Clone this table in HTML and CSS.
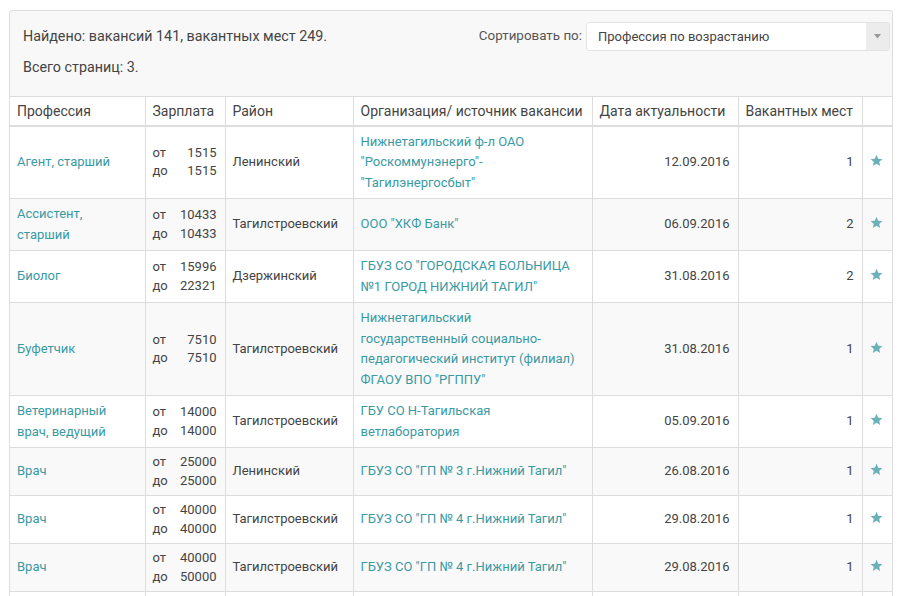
FILE: index.html
```html
<!DOCTYPE html>
<html lang="ru">
<head>
<meta charset="utf-8">
<link rel="stylesheet" href="styles.css">
</head>
<body>
<div class="panel">
  <div class="panel-head">
    <div class="summary">
      <p>Найдено: вакансий 141, вакантных мест 249.</p>
      <p>Всего страниц: 3.</p>
    </div>
    <div class="sort">
      <span class="sort-label">Сортировать по:</span>
      <div class="select">
        <span class="select-value">Профессия по возрастанию</span>
        <span class="select-arrow"><svg width="7" height="5" viewBox="0 0 7 5"><path d="M0 0h7L3.5 4.5z" fill="#999"/></svg></span>
      </div>
    </div>
  </div>
  <table class="jobs">
    <colgroup>
      <col class="c-prof"><col class="c-sal"><col class="c-dist"><col class="c-org"><col class="c-date"><col class="c-num"><col class="c-star">
    </colgroup>
    <thead>
      <tr>
        <th>Профессия</th><th>Зарплата</th><th>Район</th><th>Организация/ источник вакансии</th><th>Дата актуальности</th><th>Вакантных мест</th><th></th>
      </tr>
    </thead>
    <tbody>
      <tr>
        <td><a href="#">Агент, старший</a></td>
        <td><div class="sal"><span>от</span><span>1515</span><span>до</span><span>1515</span></div></td>
        <td>Ленинский</td>
        <td class="org"><a href="#">Нижнетагильский ф-л ОАО "Роскоммунэнерго"- "Тагилэнергосбыт"</a></td>
        <td class="r">12.09.2016</td>
        <td class="r">1</td>
        <td class="star"><svg width="13" height="13" viewBox="0 0 24 24"><path d="M12 1.5l3.1 7.2 7.8.7-5.9 5.2 1.8 7.7L12 18.2l-6.8 4.1 1.8-7.7-5.9-5.2 7.8-.7z"/></svg></td>
      </tr>
      <tr>
        <td><a href="#">Ассистент, старший</a></td>
        <td><div class="sal"><span>от</span><span>10433</span><span>до</span><span>10433</span></div></td>
        <td>Тагилстроевский</td>
        <td class="org"><a href="#">ООО "ХКФ Банк"</a></td>
        <td class="r">06.09.2016</td>
        <td class="r">2</td>
        <td class="star"><svg width="13" height="13" viewBox="0 0 24 24"><path d="M12 1.5l3.1 7.2 7.8.7-5.9 5.2 1.8 7.7L12 18.2l-6.8 4.1 1.8-7.7-5.9-5.2 7.8-.7z"/></svg></td>
      </tr>
      <tr>
        <td><a href="#">Биолог</a></td>
        <td><div class="sal"><span>от</span><span>15996</span><span>до</span><span>22321</span></div></td>
        <td>Дзержинский</td>
        <td class="org"><a href="#">ГБУЗ СО "ГОРОДСКАЯ БОЛЬНИЦА №1 ГОРОД НИЖНИЙ ТАГИЛ"</a></td>
        <td class="r">31.08.2016</td>
        <td class="r">2</td>
        <td class="star"><svg width="13" height="13" viewBox="0 0 24 24"><path d="M12 1.5l3.1 7.2 7.8.7-5.9 5.2 1.8 7.7L12 18.2l-6.8 4.1 1.8-7.7-5.9-5.2 7.8-.7z"/></svg></td>
      </tr>
      <tr>
        <td><a href="#">Буфетчик</a></td>
        <td><div class="sal"><span>от</span><span>7510</span><span>до</span><span>7510</span></div></td>
        <td>Тагилстроевский</td>
        <td class="org"><a href="#">Нижнетагильский государственный социально-педагогический институт (филиал) ФГАОУ ВПО "РГППУ"</a></td>
        <td class="r">31.08.2016</td>
        <td class="r">1</td>
        <td class="star"><svg width="13" height="13" viewBox="0 0 24 24"><path d="M12 1.5l3.1 7.2 7.8.7-5.9 5.2 1.8 7.7L12 18.2l-6.8 4.1 1.8-7.7-5.9-5.2 7.8-.7z"/></svg></td>
      </tr>
      <tr>
        <td><a href="#">Ветеринарный врач, ведущий</a></td>
        <td><div class="sal"><span>от</span><span>14000</span><span>до</span><span>14000</span></div></td>
        <td>Тагилстроевский</td>
        <td class="org"><a href="#">ГБУ СО Н-Тагильская ветлаборатория</a></td>
        <td class="r">05.09.2016</td>
        <td class="r">1</td>
        <td class="star"><svg width="13" height="13" viewBox="0 0 24 24"><path d="M12 1.5l3.1 7.2 7.8.7-5.9 5.2 1.8 7.7L12 18.2l-6.8 4.1 1.8-7.7-5.9-5.2 7.8-.7z"/></svg></td>
      </tr>
      <tr>
        <td><a href="#">Врач</a></td>
        <td><div class="sal"><span>от</span><span>25000</span><span>до</span><span>25000</span></div></td>
        <td>Ленинский</td>
        <td class="org"><a href="#">ГБУЗ СО "ГП № 3 г.Нижний Тагил"</a></td>
        <td class="r">26.08.2016</td>
        <td class="r">1</td>
        <td class="star"><svg width="13" height="13" viewBox="0 0 24 24"><path d="M12 1.5l3.1 7.2 7.8.7-5.9 5.2 1.8 7.7L12 18.2l-6.8 4.1 1.8-7.7-5.9-5.2 7.8-.7z"/></svg></td>
      </tr>
      <tr>
        <td><a href="#">Врач</a></td>
        <td><div class="sal"><span>от</span><span>40000</span><span>до</span><span>40000</span></div></td>
        <td>Тагилстроевский</td>
        <td class="org"><a href="#">ГБУЗ СО "ГП № 4 г.Нижний Тагил"</a></td>
        <td class="r">29.08.2016</td>
        <td class="r">1</td>
        <td class="star"><svg width="13" height="13" viewBox="0 0 24 24"><path d="M12 1.5l3.1 7.2 7.8.7-5.9 5.2 1.8 7.7L12 18.2l-6.8 4.1 1.8-7.7-5.9-5.2 7.8-.7z"/></svg></td>
      </tr>
      <tr>
        <td><a href="#">Врач</a></td>
        <td><div class="sal"><span>от</span><span>40000</span><span>до</span><span>50000</span></div></td>
        <td>Тагилстроевский</td>
        <td class="org"><a href="#">ГБУЗ СО "ГП № 4 г.Нижний Тагил"</a></td>
        <td class="r">29.08.2016</td>
        <td class="r">1</td>
        <td class="star"><svg width="13" height="13" viewBox="0 0 24 24"><path d="M12 1.5l3.1 7.2 7.8.7-5.9 5.2 1.8 7.7L12 18.2l-6.8 4.1 1.8-7.7-5.9-5.2 7.8-.7z"/></svg></td>
      </tr>
      <tr class="tail">
        <td></td><td></td><td></td><td></td><td></td><td></td><td></td>
      </tr>
    </tbody>
  </table>
</div>
</body>
</html>
```
FILE: styles.css
```css
html, body {
  margin: 0;
  background: #fff;
}
body {
  padding: 10px 0 0 9px;
  font-family: Roboto, "Noto Sans", sans-serif;
  font-size: 13px;
  line-height: 20.5px;
  color: #444;
}
.panel {
  width: 884px;
  box-sizing: border-box;
  border: 1px solid #ddd;
  border-radius: 3px;
  background: #f8f8f8;
  overflow: hidden;
}
.panel-head {
  display: flex;
  justify-content: space-between;
  align-items: flex-start;
  padding: 15px 2px 19px 13px;
}
.summary p {
  margin: 0;
  font-size: 14.3px;
}
.summary p + p {
  margin-top: 10px;
}
.sort {
  display: flex;
  align-items: center;
  gap: 4px;
  margin-top: -4px;
}
.sort-label {
  color: #555;
  font-size: 13.4px;
}
.select {
  width: 304px;
  height: 29px;
  box-sizing: border-box;
  display: flex;
  align-items: stretch;
  background: #fff;
  border: 1px solid #e3e3e3;
  border-radius: 3px;
  overflow: hidden;
}
.select-value {
  flex: 1;
  padding-left: 11px;
  line-height: 27px;
  color: #444;
}
.select-arrow {
  width: 23px;
  background: #ececec;
  display: flex;
  align-items: center;
  justify-content: center;
}
.jobs {
  width: 100%;
  table-layout: fixed;
  border-collapse: collapse;
  background: #fff;
}
.c-prof { width: 135px; }
.c-sal { width: 80px; }
.c-dist { width: 128px; }
.c-org { width: 239px; }
.c-date { width: 146px; }
.c-num { width: 124px; }
.c-star { width: 30px; }
.jobs th, .jobs td {
  border: 1px solid #ddd;
  padding: 5px 8px 5px 7px;
  vertical-align: middle;
  text-align: left;
}
.jobs tr > :first-child { border-left: 0; }
.jobs tr > :last-child { border-right: 0; }
.jobs th {
  font-weight: normal;
  font-size: 14px;
  color: #444;
  padding-top: 4px;
  padding-bottom: 3px;
  border-bottom: 2px solid #ddd;
}
.jobs td.org {
  padding-right: 12px;
}
.jobs tbody tr:nth-child(even) td {
  background: #f9f9f9;
}
.jobs tr.tail td {
  height: 30px;
}
.jobs a {
  color: #3a9aa3;
  text-decoration: none;
}
.jobs .r {
  text-align: right;
}
.sal {
  display: grid;
  grid-template-columns: auto 1fr;
  line-height: 18.5px;
}
.sal span:nth-child(even) {
  text-align: right;
}
.star {
  text-align: center;
  padding-left: 0;
  padding-right: 0;
}
.star svg {
  display: inline-block;
  vertical-align: -1px;
  fill: #6ab2b7;
}
```
